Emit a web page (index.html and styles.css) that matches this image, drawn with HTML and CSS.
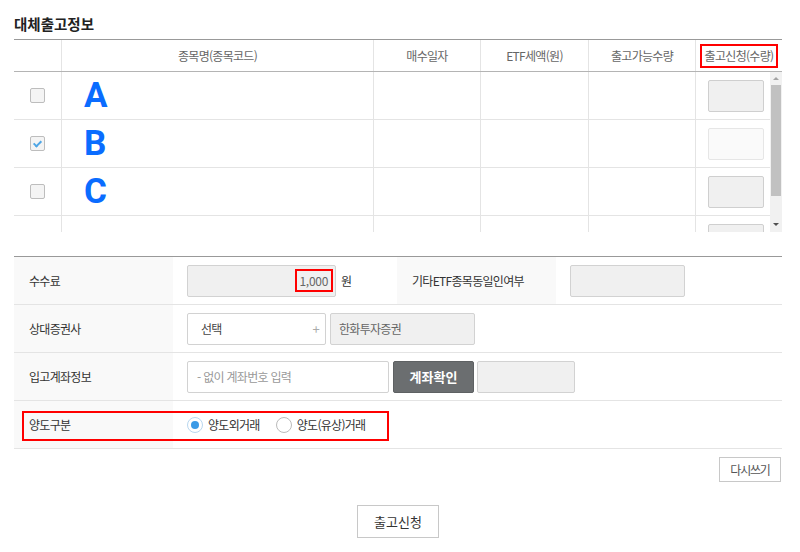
FILE: index.html
```html
<!DOCTYPE html>
<html lang="ko">
<head>
<meta charset="utf-8">
<title>대체출고정보</title>
<link rel="stylesheet" href="styles.css">
</head>
<body>
<div class="page">
  <h2 class="title">대체출고정보</h2>

  <div class="thead">
    <div class="th"></div>
    <div class="th">종목명(종목코드)</div>
    <div class="th">매수일자</div>
    <div class="th">ETF세액(원)</div>
    <div class="th">출고가능수량</div>
    <div class="th"><span class="redbox hbox">출고신청(수량)</span></div>
  </div>

  <div class="tbody">
    <div class="rows">
      <div class="row">
        <div class="td c"><span class="chk"></span></div>
        <div class="td name"><span class="letter">A</span></div>
        <div class="td"></div><div class="td"></div><div class="td"></div>
        <div class="td c"><span class="qty"></span></div>
      </div>
      <div class="row">
        <div class="td c"><span class="chk on"></span></div>
        <div class="td name"><span class="letter">B</span></div>
        <div class="td"></div><div class="td"></div><div class="td"></div>
        <div class="td c"><span class="qty light"></span></div>
      </div>
      <div class="row">
        <div class="td c"><span class="chk"></span></div>
        <div class="td name"><span class="letter">C</span></div>
        <div class="td"></div><div class="td"></div><div class="td"></div>
        <div class="td c"><span class="qty"></span></div>
      </div>
      <div class="row">
        <div class="td c"><span class="chk"></span></div>
        <div class="td name"></div>
        <div class="td"></div><div class="td"></div><div class="td"></div>
        <div class="td c"><span class="qty"></span></div>
      </div>
    </div>
    <div class="sb">
      <div class="sb-up"></div>
      <div class="sb-thumb"></div>
      <div class="sb-fill"></div>
      <div class="sb-down"></div>
    </div>
  </div>

  <div class="form">
    <div class="frow">
      <div class="flabel">수수료</div>
      <div class="fcell w224">
        <span class="inp gray fee"><span class="redbox vbox">1,000</span></span>
        <span class="unit">원</span>
      </div>
      <div class="flabel">기타ETF종목동일인여부</div>
      <div class="fcell"><span class="inp gray w115"></span></div>
    </div>
    <div class="frow">
      <div class="flabel">상대증권사</div>
      <div class="fcell">
        <span class="inp sel"><span>선택</span><span class="plus">+</span></span>
        <span class="inp gray ro">한화투자증권</span>
      </div>
    </div>
    <div class="frow">
      <div class="flabel">입고계좌정보</div>
      <div class="fcell">
        <span class="inp acct">- 없이 계좌번호 입력</span>
        <button class="btn-dark">계좌확인</button>
        <span class="inp gray w98"></span>
      </div>
    </div>
    <div class="frow">
      <div class="flabel">양도구분</div>
      <div class="fcell">
        <label class="radio"><span class="rd on"></span>양도외거래</label>
        <label class="radio"><span class="rd"></span>양도(유상)거래</label>
      </div>
      <div class="rowbox"></div>
    </div>
  </div>

  <div class="reset-wrap"><button class="btn-reset">다시쓰기</button></div>
  <div class="submit-wrap"><button class="btn-submit">출고신청</button></div>
</div>
</body>
</html>
```

FILE: styles.css
```css
body {
  margin: 0;
  font-family: "Noto Sans CJK KR", "Noto Sans", sans-serif;
  font-size: 12px;
  letter-spacing: -0.7px;
  color: #333;
  background: #fff;
}
.page {
  width: 768px;
  padding: 14px 18px 0 14px;
}
.title {
  margin: 0 0 5px;
  font-size: 14.5px;
  font-weight: 700;
  line-height: 20px;
  letter-spacing: 0;
  color: #222;
}
.thead {
  display: grid;
  grid-template-columns: 47px 312px 107px 108px 107px 87px;
  border-top: 1px solid #999;
  border-bottom: 1px solid #b4b4b4;
  height: 31px;
}
.th {
  display: flex;
  align-items: center;
  justify-content: center;
  color: #666;
  border-left: 1px solid #e4e4e4;
  line-height: 16px;
}
.th:first-child { border-left: 0; }
.redbox {
  border: 2px solid #f00;
  display: inline-block;
}
.hbox {
  padding: 2px 3px;
  line-height: 16px;
}
.tbody {
  display: flex;
  height: 160px;
}
.rows {
  width: 756px;
  overflow: hidden;
}
.row {
  display: grid;
  grid-template-columns: 47px 312px 107px 108px 107px 75px;
  height: 47px;
  border-bottom: 1px solid #e4e4e4;
}
.td {
  border-left: 1px solid #e4e4e4;
  display: flex;
  align-items: center;
}
.td:first-child { border-left: 0; }
.td.c { justify-content: center; }
.td.name { padding-left: 22px; }
.letter {
  font-family: Roboto, "Liberation Sans", sans-serif;
  font-weight: 700;
  font-size: 35px;
  line-height: 1;
  letter-spacing: 0;
  color: #0a6cff;
}
.chk {
  width: 13px;
  height: 13px;
  border: 1px solid #bdbdbd;
  border-radius: 2px;
  background: #f4f4f4;
  position: relative;
}
.chk.on::after {
  content: "";
  position: absolute;
  left: 4px;
  top: 2px;
  width: 3px;
  height: 6px;
  border: solid #4ea6e6;
  border-width: 0 2px 2px 0;
  transform: rotate(45deg);
}
.qty {
  width: 54px;
  height: 30px;
  border: 1px solid #cfcfcf;
  border-radius: 2px;
  background: #f0f0f0;
  margin-left: 5px;
}
.qty.light {
  background: #fafafa;
  border-color: #e6e6e6;
}
.sb {
  width: 12px;
  background: #f1f1f1;
  display: flex;
  flex-direction: column;
  align-items: center;
}
.sb-up, .sb-down {
  width: 0;
  height: 0;
  border-left: 3px solid transparent;
  border-right: 3px solid transparent;
}
.sb-up {
  border-bottom: 3px solid #a3a3a3;
  margin: 5px 0 5px;
}
.sb-down {
  border-top: 3px solid #505050;
  margin: 0 0 6px;
}
.sb-thumb {
  width: 10px;
  height: 111px;
  background: #c1c1c1;
}
.sb-fill { flex: 1; }

.form {
  margin-top: 24px;
  border-top: 1px solid #999;
}
.frow {
  position: relative;
  display: flex;
  height: 47px;
  border-bottom: 1px solid #e4e4e4;
}
.flabel {
  width: 144px;
  padding-left: 15px;
  background: #f9f9f9;
  display: flex;
  align-items: center;
  color: #333;
}
.fcell {
  display: flex;
  align-items: center;
  padding-left: 14px;
  gap: 4px;
}
.w224 { width: 210px; }
.inp {
  box-sizing: border-box;
  height: 32px;
  border: 1px solid #d2d2d2;
  border-radius: 2px;
  background: #fff;
  display: flex;
  align-items: center;
  color: #555;
}
.inp.gray { background: #f0f0f0; }
.fee {
  width: 149px;
  justify-content: flex-end;
  padding-right: 2px;
}
.vbox {
  padding: 0 3px;
  line-height: 19px;
  letter-spacing: -0.3px;
  color: #666;
}
.unit {
  margin-left: 1px;
  color: #333;
}
.w115 { width: 115px; }
.w98 { width: 98px; margin-left: -1px; }
.sel {
  width: 139px;
  padding: 0 6px 0 13px;
  justify-content: space-between;
  color: #444;
}
.plus {
  color: #aaa;
  font-size: 13px;
}
.ro {
  width: 145px;
  padding-left: 8px;
  color: #666;
}
.acct {
  width: 202px;
  padding-left: 9px;
  color: #999;
}
.btn-dark {
  width: 81px;
  height: 32px;
  border: 1px solid #5e6163;
  border-radius: 2px;
  background: #6b6e70;
  color: #fff;
  font-family: inherit;
  font-size: 13px;
  font-weight: 700;
  padding: 0;
}
.radio {
  display: flex;
  align-items: center;
  gap: 5px;
  color: #333;
  margin-right: 12px;
}
.rd {
  box-sizing: border-box;
  width: 16px;
  height: 16px;
  border: 1px solid #bbb;
  border-radius: 50%;
  background: #fff;
  position: relative;
}
.rd.on { border-color: #b9d7ef; }
.rd.on::after {
  content: "";
  position: absolute;
  left: 3px;
  top: 3px;
  width: 8px;
  height: 8px;
  border-radius: 50%;
  background: #3b9ae6;
}
.rowbox {
  position: absolute;
  left: 8px;
  top: 10px;
  width: 363px;
  height: 26px;
  border: 2px solid #f00;
}
.reset-wrap {
  display: flex;
  justify-content: flex-end;
  margin-top: 8px;
}
.btn-reset {
  width: 62px;
  height: 25px;
  border: 1px solid #c8c8c8;
  background: #fff;
  color: #555;
  font-family: inherit;
  font-size: 12px;
  letter-spacing: -1.2px;
  padding: 0;
  margin-right: 1px;
}
.submit-wrap {
  display: flex;
  justify-content: center;
  margin-top: 23px;
}
.btn-submit {
  width: 82px;
  height: 33px;
  border: 1px solid #c8c8c8;
  background: #fff;
  color: #333;
  font-family: inherit;
  font-size: 13px;
  padding: 0;
}
```
